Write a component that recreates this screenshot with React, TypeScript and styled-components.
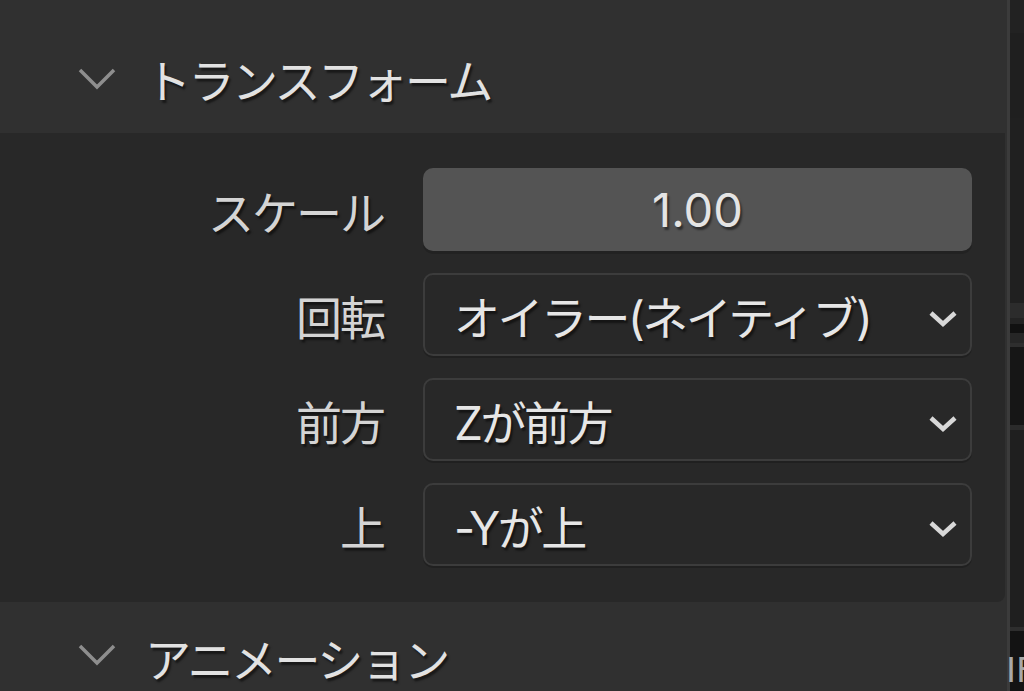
import React from "react";
import styled, { createGlobalStyle } from "styled-components";

const GlobalStyle = createGlobalStyle`
  html, body { margin: 0; padding: 0; background: #303030; }
  body { width: 1024px; height: 691px; overflow: hidden; }
  #root { width: 1024px; height: 691px; }
`;

const Screen = styled.div`
  display: flex;
  width: 1024px;
  height: 691px;
  background: #303030;
  overflow: hidden;
  font-family: "Inter", "Noto Sans CJK JP", sans-serif;
`;

const PropertiesArea = styled.div`
  width: 1007px;
  display: flex;
  flex-direction: column;
`;

const PanelHeader = styled.div<{ $top: number; $h?: number }>`
  display: flex;
  align-items: flex-start;
  gap: 28px;
  padding: ${(p) => p.$top}px 0 0 77px;
  box-sizing: border-box;
  ${(p) => (p.$h ? `height: ${p.$h}px;` : "flex: 1;")}
  background: #303030;
`;

const HeaderChevron = styled.svg`
  width: 40px;
  height: 24px;
  flex: none;
`;

const Title = styled.span<{ $shift: number }>`
  font-size: 46px;
  line-height: 46px;
  letter-spacing: -2.5px;
  color: #e2e2e2;
  margin-top: ${(p) => p.$shift}px;
  text-shadow: 2px 3px 2px rgba(0, 0, 0, 0.5);
  white-space: nowrap;
`;

const PanelBody = styled.div`
  height: 469px;
  box-sizing: border-box;
  margin-right: 2px;
  background: #282828;
  border-bottom-right-radius: 8px;
  padding-top: 35px;
  display: grid;
  grid-template-columns: 384px 549px;
  grid-auto-rows: 83px;
  column-gap: 39px;
  row-gap: 22px;
  align-content: start;
`;

const Label = styled.div`
  display: flex;
  align-items: center;
  justify-content: flex-end;
  font-size: 46px;
  letter-spacing: -2px;
  color: #d4d4d4;
  text-shadow: 2px 3px 2px rgba(0, 0, 0, 0.5);
  white-space: nowrap;
`;

const NumberField = styled.div`
  display: flex;
  align-items: center;
  justify-content: center;
  background: #545454;
  border-radius: 10px;
  box-shadow: 0 3px 0 #222222;
  font-size: 47px;
  color: #e4e4e4;
  text-shadow: 2px 3px 2px rgba(0, 0, 0, 0.45);
`;

const Dropdown = styled.div`
  display: flex;
  align-items: center;
  justify-content: space-between;
  box-sizing: border-box;
  padding: 0 12px 0 29px;
  background: #282828;
  border: 2px solid #3c3c3c;
  border-radius: 10px;
  box-shadow: 0 2px 0 #202020;
  font-size: 46px;
  letter-spacing: -2.5px;
  color: #e6e6e6;
  text-shadow: 2px 3px 2px rgba(0, 0, 0, 0.5);
  white-space: nowrap;
`;

const DropChevron = styled.svg`
  width: 30px;
  height: 18px;
  flex: none;
  margin-top: 8px;
`;

const Divider = styled.div`
  width: 3px;
  background: #3b3b3b;
  flex: none;
`;

const SideStrip = styled.div`
  flex: 1;
  display: flex;
  flex-direction: column;
`;

const StripBand = styled.div<{ $h: number; $c: string }>`
  height: ${(p) => p.$h}px;
  background: ${(p) => p.$c};
  flex: none;
`;

const StripTail = styled.div`
  flex: 1;
  background: #131313;
  position: relative;
`;

const TailGlyphs = styled.span`
  position: absolute;
  left: -4px;
  top: 22px;
  font-family: "DejaVu Sans", sans-serif;
  font-size: 34px;
  line-height: 34px;
  color: #a8a8a8;
  white-space: nowrap;
`;

const Chevron = ({ color }: { color: string }) => (
  <HeaderChevron viewBox="0 0 40 24">
    <path d="M3 3 L20 20 L37 3" fill="none" stroke={color} strokeWidth="3.5" />
  </HeaderChevron>
);

const DownArrow = () => (
  <DropChevron viewBox="0 0 30 18">
    <path d="M3 3 L15 14 L27 3" fill="none" stroke="#d8d8d8" strokeWidth="4.5" />
  </DropChevron>
);

const rows = [
  { label: "回転", value: "オイラー(ネイティブ)" },
  { label: "前方", value: "Zが前方" },
  { label: "上", value: "-Yが上" },
];

const bands: [number, string][] = [
  [33, "#222222"],
  [85, "#1f1f1f"],
  [185, "#202020"],
  [15, "#2c2c2c"],
  [6, "#232323"],
  [9, "#111111"],
  [10, "#262626"],
  [4, "#2e2e2e"],
  [78, "#161616"],
  [5, "#2b2b2b"],
  [197, "#1f1f1f"],
  [4, "#2e2e2e"],
];

export default function App() {
  return (
    <>
      <GlobalStyle />
      <Screen>
        <PropertiesArea>
          <PanelHeader $top={67} $h={133}>
            <Chevron color="#8e8e8e" />
            <Title $shift={-9}>トランスフォーム</Title>
          </PanelHeader>
          <PanelBody>
            <Label>スケール</Label>
            <NumberField>1.00</NumberField>
            {rows.map((r) => (
              <React.Fragment key={r.label}>
                <Label>{r.label}</Label>
                <Dropdown>
                  <span>{r.value}</span>
                  <DownArrow />
                </Dropdown>
              </React.Fragment>
            ))}
          </PanelBody>
          <PanelHeader $top={41}>
            <Chevron color="#8e8e8e" />
            <Title $shift={-6}>アニメーション</Title>
          </PanelHeader>
        </PropertiesArea>
        <Divider />
        <SideStrip>
          {bands.map(([h, c], i) => (
            <StripBand key={i} $h={h} $c={c} />
          ))}
          <StripTail>
            <TailGlyphs>IF</TailGlyphs>
          </StripTail>
        </SideStrip>
      </Screen>
    </>
  );
}
